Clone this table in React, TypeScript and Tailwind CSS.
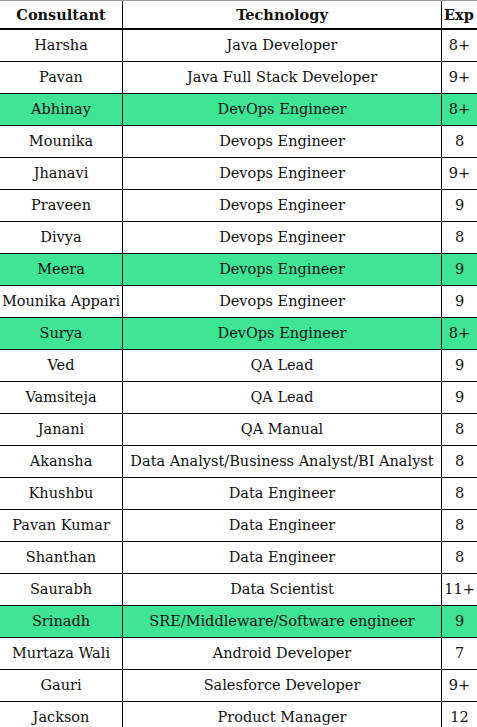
const rows: [string, string, string, boolean][] = [
  ["Harsha", "Java Developer", "8+", false],
  ["Pavan", "Java Full Stack Developer", "9+", false],
  ["Abhinay", "DevOps Engineer", "8+", true],
  ["Mounika", "Devops Engineer", "8", false],
  ["Jhanavi", "Devops Engineer", "9+", false],
  ["Praveen", "Devops Engineer", "9", false],
  ["Divya", "Devops Engineer", "8", false],
  ["Meera", "Devops Engineer", "9", true],
  ["Mounika Appari", "Devops Engineer", "9", false],
  ["Surya", "DevOps Engineer", "8+", true],
  ["Ved", "QA Lead", "9", false],
  ["Vamsiteja", "QA Lead", "9", false],
  ["Janani", "QA Manual", "8", false],
  ["Akansha", "Data Analyst/Business Analyst/BI Analyst", "8", false],
  ["Khushbu", "Data Engineer", "8", false],
  ["Pavan Kumar", "Data Engineer", "8", false],
  ["Shanthan", "Data Engineer", "8", false],
  ["Saurabh", "Data Scientist", "11+", false],
  ["Srinadh", "SRE/Middleware/Software engineer", "9", true],
  ["Murtaza Wali", "Android Developer", "7", false],
  ["Gauri", "Salesforce Developer", "9+", false],
  ["Jackson", "Product Manager", "12", false],
];

export default function App() {
  return (
    <div className="w-[477px] h-[727px] overflow-hidden bg-white border-t border-[#9a9a9a] font-['DejaVu_Serif',serif] text-[14.5px] text-[#111]">
      <div className="grid grid-cols-[122px_1px_318px_1px_35px] h-[27px] items-center font-bold">
        <div className="text-center whitespace-nowrap">Consultant</div>
        <div className="h-full bg-black" />
        <div className="text-center">Technology</div>
        <div className="h-full bg-black" />
        <div className="pl-[2px]">Exp</div>
      </div>
      <div className="h-[2px] bg-black" />
      {rows.map(([name, tech, exp, hl]) => (
        <div
          key={name}
          className={`grid grid-cols-[122px_1px_318px_1px_35px] h-[32px] items-center border-b border-black ${hl ? "bg-[#3de595]" : "bg-white"}`}
        >
          <div className="text-center whitespace-nowrap">{name}</div>
          <div className="h-full bg-black" />
          <div className="text-center whitespace-nowrap">{tech}</div>
          <div className="h-full bg-black" />
          <div className="text-center">{exp}</div>
        </div>
      ))}
    </div>
  );
}
